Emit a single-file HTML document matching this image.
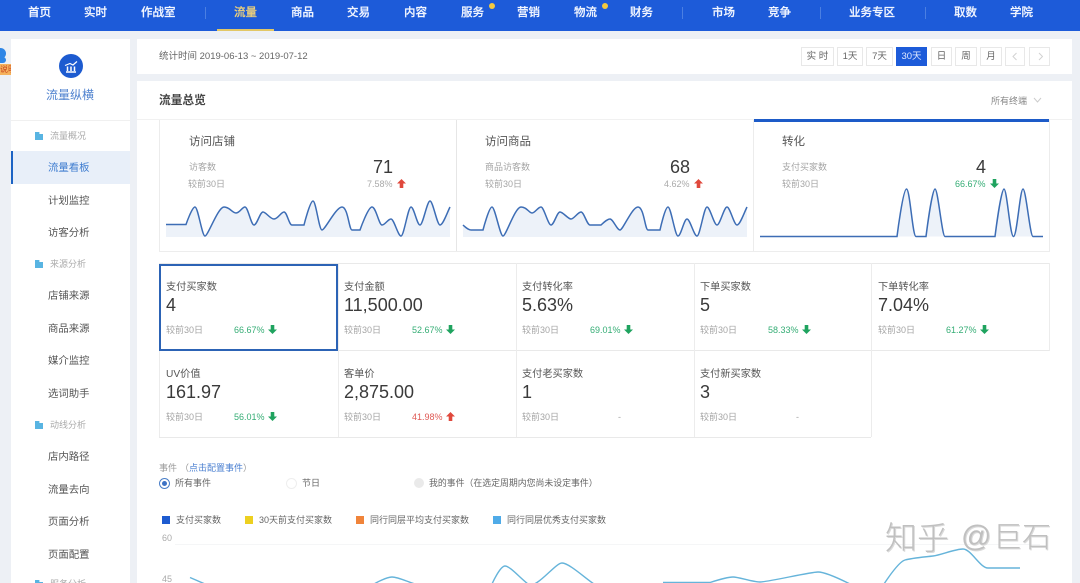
<!DOCTYPE html>
<html lang="zh"><head><meta charset="utf-8"><title>流量纵横</title>
<style>
html{margin:0;padding:0;height:583px;overflow:hidden;background:#edf0f5}
body{margin:0;padding:0;width:1080px;height:583px;overflow:hidden;position:relative;background:#edf0f5;font-family:"Liberation Sans","Noto Sans CJK SC",sans-serif;color:#333}
.b{position:absolute}
.t{position:absolute;white-space:nowrap;line-height:14px;height:14px}
.nav{font-size:11.5px;color:#f2f6ff;top:6px;font-weight:500;-webkit-text-stroke:.2px #f2f6ff}
.sep{position:absolute;top:7px;width:1px;height:12px;background:#4b7fe2}
.side{font-size:10.4px;color:#555;left:48px}
.sh{font-size:9px;color:#aaa;left:50px}
.ic{position:absolute;left:35px;width:8px;height:8px;background:#58b4e2;clip-path:polygon(0 0,55% 0,55% 25%,100% 25%,100% 100%,0 100%)}
.btn{position:absolute;top:47px;height:17px;line-height:17px;border:1px solid #e8e8e8;background:#fff;font-size:9.5px;color:#666;text-align:center;box-sizing:content-box}
.lbl{font-size:10.2px;color:#555}
.val{font-size:18px;color:#3a3a3a;line-height:20px;height:20px}
.cmp{font-size:9px;color:#a5a5a5}
.tt{font-size:11.5px;color:#555}
.pc{font-size:9px}
.g{color:#35ad75}.r{color:#df5a55}
.dn,.up{position:absolute;width:9px;height:9px}
.dn{background:#1fa35f;clip-path:polygon(30% 0,70% 0,70% 50%,100% 50%,50% 100%,0 50%,30% 50%)}
.up{background:#e0483c;clip-path:polygon(50% 0,100% 50%,70% 50%,70% 100%,30% 100%,30% 50%,0 50%)}
.hl{position:absolute;background:#e9e9e9;height:1px}
.vl{position:absolute;background:#ececec;width:1px}
.leg{position:absolute;width:8px;height:8px;top:516px}
.wm{position:absolute;color:#c0c0c0;font-weight:300;white-space:nowrap;line-height:34px;height:34px;font-size:30px;text-shadow:1px 1px 0 #dadada}
</style></head><body>

<div class="b" style="left:0;top:0;width:1080px;height:31px;background:#1d5bd9"></div>
<div class="t nav" style="left:28px">首页</div>
<div class="t nav" style="left:84px">实时</div>
<div class="t nav" style="left:141px">作战室</div>
<div class="sep" style="left:205px"></div>
<div class="t nav" style="left:234px;color:#ecd07c;-webkit-text-stroke:.2px #ecd07c">流量</div>
<div class="b" style="left:217px;top:29px;width:57px;height:2px;background:#e2c766"></div>
<div class="t nav" style="left:291px">商品</div>
<div class="t nav" style="left:347px">交易</div>
<div class="t nav" style="left:404px">内容</div>
<div class="t nav" style="left:461px">服务</div>
<div class="b" style="left:489px;top:3px;width:6px;height:6px;border-radius:50%;background:#f3c93f"></div>
<div class="t nav" style="left:517px">营销</div>
<div class="t nav" style="left:574px">物流</div>
<div class="b" style="left:602px;top:3px;width:6px;height:6px;border-radius:50%;background:#f3c93f"></div>
<div class="t nav" style="left:630px">财务</div>
<div class="sep" style="left:682px"></div>
<div class="t nav" style="left:712px">市场</div>
<div class="t nav" style="left:768px">竞争</div>
<div class="sep" style="left:820px"></div>
<div class="t nav" style="left:849px">业务专区</div>
<div class="sep" style="left:925px"></div>
<div class="t nav" style="left:954px">取数</div>
<div class="t nav" style="left:1010px">学院</div>

<!-- left floating badge -->
<div class="b" style="left:-5px;top:48px;width:11px;height:11px;border-radius:50%;background:#2f86e6"></div>
<div class="b" style="left:-3px;top:57px;width:9px;height:6px;background:#2f86e6;border-radius:3px"></div>
<div class="b" style="left:0;top:64px;width:15px;height:11px;background:#f5b25c"></div>
<div class="t" style="left:0;top:64px;width:15px;height:11px;line-height:11px;font-size:8px;color:#c8431f;overflow:hidden;text-align:right">说明</div>

<!-- sidebar -->
<div class="b" style="left:11px;top:39px;width:119px;height:544px;background:#fff"></div>
<div class="b" style="left:59px;top:54px;width:24px;height:24px;border-radius:50%;background:#1d5bd0"></div>
<svg class="b" style="left:59px;top:54px" width="24" height="24" viewBox="0 0 24 24" fill="none" stroke="#fff" stroke-width="1.2"><path d="M6 11.5 L11 9.5 L14 11 L18 7.500"/><path d="M7 18H17M8.500 12.500V17M12 12.500V17M15.500 12.500V17" stroke-width="1.500"/></svg>
<div class="t" style="left:46px;top:88px;font-size:12px;color:#4f82cf">流量纵横</div>
<div class="b" style="left:11px;top:120px;width:119px;height:1px;background:#f0f0f0"></div>

<div class="ic" style="top:132px"></div><div class="t sh" style="top:129px">流量概况</div>
<div class="b" style="left:11px;top:151px;width:119px;height:33px;background:#e8eff9"></div>
<div class="b" style="left:11px;top:151px;width:2px;height:33px;background:#1c63c4"></div>
<div class="t side" style="top:162px;color:#3f7dd0">流量看板</div>
<div class="t side" style="top:195px">计划监控</div>
<div class="t side" style="top:227px">访客分析</div>
<div class="ic" style="top:260px"></div><div class="t sh" style="top:257px">来源分析</div>
<div class="t side" style="top:290px">店铺来源</div>
<div class="t side" style="top:323px">商品来源</div>
<div class="t side" style="top:355px">媒介监控</div>
<div class="t side" style="top:388px">选词助手</div>
<div class="ic" style="top:421px"></div><div class="t sh" style="top:418px">动线分析</div>
<div class="t side" style="top:451px">店内路径</div>
<div class="t side" style="top:484px">流量去向</div>
<div class="t side" style="top:516px">页面分析</div>
<div class="t side" style="top:549px">页面配置</div>
<div class="ic" style="top:580px"></div><div class="t sh" style="top:577px">服务分析</div>

<!-- top card -->
<div class="b" style="left:137px;top:39px;width:935px;height:35px;background:#fff"></div>
<div class="t" style="left:159px;top:50px;font-size:9.5px;color:#666">统计时间 2019-06-13 ~ 2019-07-12</div>
<div class="btn" style="left:801px;width:31px">实 时</div>
<div class="btn" style="left:837px;width:24px">1天</div>
<div class="btn" style="left:866px;width:25px">7天</div>
<div class="btn" style="left:896px;width:29px;background:#1d5bd9;border-color:#1d5bd9;color:#dfe9ff">30天</div>
<div class="btn" style="left:931px;width:19px">日</div>
<div class="btn" style="left:955px;width:20px">周</div>
<div class="btn" style="left:980px;width:20px">月</div>
<div class="btn" style="left:1005px;width:18px;color:#ccc"></div>
<div class="btn" style="left:1029px;width:19px;color:#ccc"></div>
<svg class="b" style="left:1005px;top:47px" width="45" height="19" fill="none" stroke="#d2d2d2"><path d="M11.500 6 L8 9.500 L11.500 13M34 6 L37.500 9.500 L34 13"/></svg>

<!-- main card -->
<div class="b" style="left:137px;top:81px;width:935px;height:502px;background:#fff"></div>
<div class="t" style="left:159px;top:94px;font-size:11.7px;font-weight:bold;color:#444">流量总览</div>
<div class="t" style="left:991px;top:94px;font-size:9px;color:#888">所有终端</div>
<svg class="b" style="left:1033px;top:97px" width="9" height="7" fill="none" stroke="#ccc"><path d="M1 1 L4.500 5 L8 1"/></svg>
<div class="b" style="left:137px;top:119px;width:935px;height:1px;background:#f1f1f1"></div>

<!-- tabs -->
<div class="vl" style="left:159px;top:120px;height:131px"></div>
<div class="vl" style="left:456px;top:120px;height:131px;background:#e6e6e6"></div>
<div class="vl" style="left:753px;top:120px;height:131px"></div>
<div class="vl" style="left:1049px;top:120px;height:131px"></div>
<div class="hl" style="left:159px;top:251px;width:891px;background:#ededed"></div>
<div class="b" style="left:754px;top:119px;width:295px;height:3px;background:#1d5bc8"></div>

<div class="t tt" style="left:189px;top:135px">访问店铺</div>
<div class="t cmp" style="left:189px;top:160px">访客数</div>
<div class="t cmp" style="left:188px;top:177px">较前30日</div>
<div class="t val" style="left:373px;top:157px">71</div>
<div class="t pc" style="left:367px;top:177px;color:#aaa">7.58%</div>
<div class="up" style="left:397px;top:179px"></div>

<div class="t tt" style="left:485px;top:135px">访问商品</div>
<div class="t cmp" style="left:485px;top:160px">商品访客数</div>
<div class="t cmp" style="left:485px;top:177px">较前30日</div>
<div class="t val" style="left:670px;top:157px">68</div>
<div class="t pc" style="left:664px;top:177px;color:#aaa">4.62%</div>
<div class="up" style="left:694px;top:179px"></div>

<div class="t tt" style="left:782px;top:135px">转化</div>
<div class="t cmp" style="left:782px;top:160px">支付买家数</div>
<div class="t cmp" style="left:782px;top:177px">较前30日</div>
<div class="t val" style="left:976px;top:157px">4</div>
<div class="t pc g" style="left:955px;top:177px">66.67%</div>
<div class="dn" style="left:990px;top:179px"></div>

<svg class="b" style="left:0;top:0" width="1080" height="583" fill="none">
<path fill="#edf2f9" d="M166 224.500 H186 S192 207 195 207 S202 236 205 236 S218 207 224 207 S232 213 236 213 S242 207 245 207 S251 225 254 225 S260 212 263 212 S270 219 274 219 S281 212 284 212 S289 225 292 225 H304 S310 201 313 201 S319 230 322 230 S336 207 342 207 S349 230 352 230 H360 S368 207 372 207 S379 225 382 225 S388 219 391 219 S398 236 401 236 S408 207 411 207 S417 225 420 225 S427 201 430 201 S437 225 440 225 S447 213 450 207 V237 H166Z"/>
<path stroke="#3d6db5" stroke-width="1.5" d="M166 224.500 H186 S192 207 195 207 S202 236 205 236 S218 207 224 207 S232 213 236 213 S242 207 245 207 S251 225 254 225 S260 212 263 212 S270 219 274 219 S281 212 284 212 S289 225 292 225 H304 S310 201 313 201 S319 230 322 230 S336 207 342 207 S349 230 352 230 H360 S368 207 372 207 S379 225 382 225 S388 219 391 219 S398 236 401 236 S408 207 411 207 S417 225 420 225 S427 201 430 201 S437 225 440 225 S447 213 450 207"/>
<path fill="#edf2f9" d="M463 225 S468 230 471 230 H483 S489 207 492 207 S500 236 503 236 S515 207 521 207 S529 213 532 213 S538 207 541 207 S548 225 551 225 S557 212 560 212 S568 219 571 219 S578 212 581 212 S587 225 590 225 H601 S607 219 610 219 S617 230 620 230 S632 207 638 207 S645 230 648 230 H660 S665 207 668 207 S675 236 678 236 S684 219 687 219 S694 236 697 236 S704 207 707 207 S714 225 717 225 S724 207 727 207 S734 225 737 225 S744 213 747 207 V237 H463Z"/>
<path stroke="#3d6db5" stroke-width="1.5" d="M463 225 S468 230 471 230 H483 S489 207 492 207 S500 236 503 236 S515 207 521 207 S529 213 532 213 S538 207 541 207 S548 225 551 225 S557 212 560 212 S568 219 571 219 S578 212 581 212 S587 225 590 225 H601 S607 219 610 219 S617 230 620 230 S632 207 638 207 S645 230 648 230 H660 S665 207 668 207 S675 236 678 236 S684 219 687 219 S694 236 697 236 S704 207 707 207 S714 225 717 225 S724 207 727 207 S734 225 737 225 S744 213 747 207"/>
<path fill="#edf2f9" d="M897 236.500 S903 189 906.500 189 S912.500 236.500 916 236.500 H926 S932 189 935 189 S942 236.500 945 236.500 H995 S1001 189 1004 189 S1010 236.500 1013.500 236.500 S1020 189 1023 189 S1030 236.500 1033 236.500Z"/>
<path stroke="#3d6db5" stroke-width="1.5" d="M760 236.500 H897 S903 189 906.500 189 S912.500 236.500 916 236.500 H926 S932 189 935 189 S942 236.500 945 236.500 H995 S1001 189 1004 189 S1010 236.500 1013.500 236.500 S1020 189 1023 189 S1030 236.500 1033 236.500 H1043"/>
<path stroke="#f5f6f7" d="M175 544.500 H1040"/>
<path stroke="#66b4da" stroke-width="1.4" d="M190 577.500 L205 584 M374 584 S386 577 392 577 S408 582 415 584 M492 584 S500 566 505 566 S520 578 528 584 S555 563 562 563 S585 578 594 584 M663 582.500 H710 S727 577 733 577 S752 582 760 582 S810 572 818 572 S842 580 850 584 M884 584 S898 562 905 560 S925 557 933 556 S955 549 963 549 S980 568 988 568 H1020"/>
</svg>

<!-- metric grid -->
<div class="hl" style="left:159px;top:263px;width:891px"></div>
<div class="hl" style="left:159px;top:350px;width:891px"></div>
<div class="hl" style="left:159px;top:437px;width:712px"></div>
<div class="vl" style="left:159px;top:263px;height:174px"></div>
<div class="vl" style="left:338px;top:263px;height:174px"></div>
<div class="vl" style="left:516px;top:263px;height:174px"></div>
<div class="vl" style="left:694px;top:263px;height:174px"></div>
<div class="vl" style="left:871px;top:263px;height:174px"></div>
<div class="vl" style="left:1049px;top:263px;height:88px"></div>
<div class="b" style="left:159px;top:264px;width:179px;height:87px;box-sizing:border-box;border:2px solid #2c63b5"></div>

<div class="t lbl" style="left:166px;top:281px">支付买家数</div><div class="t val" style="left:166px;top:295px">4</div>
<div class="t cmp" style="left:166px;top:323px">较前30日</div><div class="t pc g" style="left:234px;top:323px">66.67%</div><div class="dn" style="left:268px;top:325px"></div>

<div class="t lbl" style="left:344px;top:281px">支付金额</div><div class="t val" style="left:344px;top:295px">11,500.00</div>
<div class="t cmp" style="left:344px;top:323px">较前30日</div><div class="t pc g" style="left:412px;top:323px">52.67%</div><div class="dn" style="left:446px;top:325px"></div>

<div class="t lbl" style="left:522px;top:281px">支付转化率</div><div class="t val" style="left:522px;top:295px">5.63%</div>
<div class="t cmp" style="left:522px;top:323px">较前30日</div><div class="t pc g" style="left:590px;top:323px">69.01%</div><div class="dn" style="left:624px;top:325px"></div>

<div class="t lbl" style="left:700px;top:281px">下单买家数</div><div class="t val" style="left:700px;top:295px">5</div>
<div class="t cmp" style="left:700px;top:323px">较前30日</div><div class="t pc g" style="left:768px;top:323px">58.33%</div><div class="dn" style="left:802px;top:325px"></div>

<div class="t lbl" style="left:878px;top:281px">下单转化率</div><div class="t val" style="left:878px;top:295px">7.04%</div>
<div class="t cmp" style="left:878px;top:323px">较前30日</div><div class="t pc g" style="left:946px;top:323px">61.27%</div><div class="dn" style="left:980px;top:325px"></div>

<div class="t lbl" style="left:166px;top:368px">UV价值</div><div class="t val" style="left:166px;top:382px">161.97</div>
<div class="t cmp" style="left:166px;top:410px">较前30日</div><div class="t pc g" style="left:234px;top:410px">56.01%</div><div class="dn" style="left:268px;top:412px"></div>

<div class="t lbl" style="left:344px;top:368px">客单价</div><div class="t val" style="left:344px;top:382px">2,875.00</div>
<div class="t cmp" style="left:344px;top:410px">较前30日</div><div class="t pc r" style="left:412px;top:410px">41.98%</div><div class="up" style="left:446px;top:412px"></div>

<div class="t lbl" style="left:522px;top:368px">支付老买家数</div><div class="t val" style="left:522px;top:382px">1</div>
<div class="t cmp" style="left:522px;top:410px">较前30日</div><div class="t cmp" style="left:618px;top:410px">-</div>

<div class="t lbl" style="left:700px;top:368px">支付新买家数</div><div class="t val" style="left:700px;top:382px">3</div>
<div class="t cmp" style="left:700px;top:410px">较前30日</div><div class="t cmp" style="left:796px;top:410px">-</div>

<!-- events -->
<div class="t" style="left:159px;top:461px;font-size:9px;color:#999">事件</div>
<div class="t" style="left:180px;top:461px;font-size:9px;color:#4a7fd0"><span style="color:#999">（</span>点击配置事件<span style="color:#999">）</span></div>
<div class="b" style="left:159px;top:478px;width:9px;height:9px;border:1px solid #4a7fc8;border-radius:50%"></div>
<div class="b" style="left:162px;top:481px;width:5px;height:5px;background:#3d72c4;border-radius:50%"></div>
<div class="t" style="left:175px;top:476px;font-size:9px;color:#666">所有事件</div>
<div class="b" style="left:286px;top:478px;width:9px;height:9px;border:1px solid #eee;border-radius:50%"></div>
<div class="t" style="left:302px;top:476px;font-size:9px;color:#666">节日</div>
<div class="b" style="left:414px;top:478px;width:10px;height:10px;background:#eaeaea;border-radius:50%"></div>
<div class="t" style="left:429px;top:476px;font-size:8.9px;color:#666">我的事件（在选定周期内您尚未设定事件）</div>

<!-- legend -->
<div class="leg" style="left:162px;background:#1d5bd0"></div><div class="t" style="left:176px;top:513px;font-size:9px;color:#666">支付买家数</div>
<div class="leg" style="left:245px;background:#edd020"></div><div class="t" style="left:259px;top:513px;font-size:9px;color:#666">30天前支付买家数</div>
<div class="leg" style="left:356px;background:#f0843a"></div><div class="t" style="left:370px;top:513px;font-size:9px;color:#666">同行同层平均支付买家数</div>
<div class="leg" style="left:493px;background:#4fabe8"></div><div class="t" style="left:507px;top:513px;font-size:9px;color:#666">同行同层优秀支付买家数</div>
<div class="t" style="left:162px;top:531px;font-size:9px;color:#aaa">60</div>
<div class="t" style="left:162px;top:572px;font-size:9px;color:#aaa">45</div>

<!-- watermark -->
<div class="wm" style="left:885px;top:521px;font-size:32px">知乎</div>
<div class="wm" style="left:961px;top:520px">@</div>
<div class="wm" style="left:993px;top:521px;font-size:29px">巨石</div>

</body></html>
